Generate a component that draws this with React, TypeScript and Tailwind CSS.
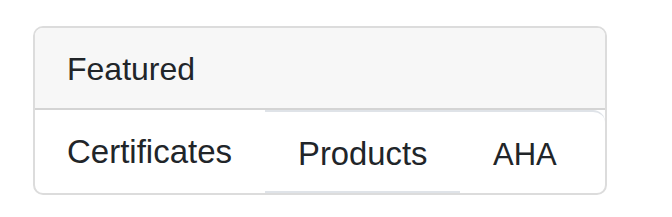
export default function App() {
  return (
    <div className="w-[672px] h-[217px] bg-white pt-[26px] pl-[33px]" style={{ fontFamily: '"Liberation Sans", Arial, sans-serif' }}>
      <div className="w-[574px] h-[169px] border-2 border-[#dcdcdc] rounded-[10px] overflow-hidden flex flex-col text-[#212529]">
        <div className="h-[82px] bg-[#f7f7f7] border-b-2 border-[#d4d4d4] flex items-center pl-[32px] text-[32px] leading-none pt-[1px]">
          Featured
        </div>
        <div className="flex-1 flex">
          <div className="w-[230px] flex items-center pl-[32px] text-[33px] leading-none pb-[1px]">Certificates</div>
          <div className="w-[195px] border-t-2 border-b-2 border-[#dfe3e8] flex items-center pl-[33px] text-[32.8px] leading-none pt-[5px]">Products</div>
          <div className="flex-1 border-t-2 border-[#dfe3e8] rounded-tr-[12px] flex items-center pl-[33px] text-[31px] leading-none pt-[3px]">AHA</div>
        </div>
      </div>
    </div>
  );
}
